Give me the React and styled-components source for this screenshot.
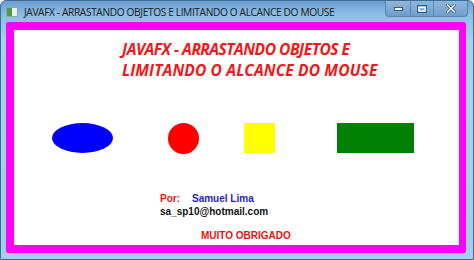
import React from 'react'
import styled, { createGlobalStyle } from 'styled-components'

const Global = createGlobalStyle`
  html, body { margin: 0; padding: 0; background: #ffffff; }
  body { width: 474px; height: 260px; overflow: hidden; }
`

const Window = styled.div`
  width: 474px;
  height: 260px;
  box-sizing: border-box;
  display: flex;
  flex-direction: column;
  background: linear-gradient(180deg, #6c9fd0 0px, #8dbde6 14px, #a6d3f1 40px, #9fd0ee 100%);
  border: 1px solid #3f6c94;
  border-radius: 6px 6px 0 0;
  overflow: hidden;
`

const TitleBar = styled.div`
  height: 21px;
  display: flex;
  align-items: flex-start;
  padding-left: 5px;
`

const AppIcon = styled.div`
  width: 12px;
  height: 10px;
  margin-top: 6px;
  background: linear-gradient(90deg, #4f9c3c 0 5px, #e8f0f4 5px);
  border: 1px solid #8ea4b4;
  box-sizing: border-box;
`

const Title = styled.div`
  margin-left: 6px;
  margin-top: 4px;
  font-family: "Open Sans", "DejaVu Sans", sans-serif;
  font-size: 10.2px;
  color: #1a1a1a;
  white-space: nowrap;
  flex: 1;
  letter-spacing: -0.38px;
`

const Buttons = styled.div`
  display: flex;
  height: 15px;
  margin-right: 5px;
  border: 1px solid #5b86b0;
  border-top: none;
  border-radius: 0 0 4px 4px;
  background: linear-gradient(180deg, #8fb7dd, #6e9ccb);
  overflow: hidden;
`

const Btn = styled.div`
  width: ${p => p.$w}px;
  display: flex;
  align-items: center;
  justify-content: center;
  border-left: ${p => (p.$first ? 'none' : '1px solid #5b86b0')};
`

const Client = styled.div`
  flex: 1;
  margin: 0 7px 6px 5px;
  background: #ff00ff;
  padding: 8px 7px 8px 8px;
  display: flex;
  border-radius: 2px;
`

const Stage = styled.div`
  flex: 1;
  background: #ffffff;
  display: flex;
  flex-direction: column;
`

const Heading = styled.h1`
  margin: 9px 0 0 106px;
  font-family: "Open Sans", "DejaVu Sans", sans-serif;
  font-style: italic;
  font-weight: 700;
  font-size: 15.6px;
  line-height: 21px;
  color: #f01818;
`

const HeadLine = styled.div`
  white-space: nowrap;
  letter-spacing: ${p => p.$ls}px;
  padding-left: ${p => p.$indent || 0}px;
`

const Shapes = styled.div`
  display: flex;
  align-items: center;
  margin: 42px 0 0 38px;
  height: 30px;
`

const Shape = styled.div`
  width: ${p => p.$w}px;
  height: ${p => p.$h}px;
  margin-left: ${p => p.$gap}px;
  background: ${p => p.$color};
  border-radius: ${p => (p.$round ? '50%' : '0')};
  flex-shrink: 0;
`

const Credits = styled.div`
  margin: 39px 0 0 146px;
  font-family: "Liberation Sans", Arial, sans-serif;
  font-weight: 700;
  font-size: 10px;
  line-height: 13px;
`

const Line = styled.div`
  display: flex;
  color: ${p => p.$color || '#111111'};
`

const Label = styled.span`
  color: #ee1111;
  width: 32px;
`

const Name = styled.span`
  color: #2424d0;
`

const Thanks = styled.div`
  margin: 12px 0 0 187px;
  font-family: "Liberation Sans", Arial, sans-serif;
  font-weight: 700;
  font-size: 10px;
  color: #ee1111;
`

export default function App() {
  return (
    <>
      <Global />
      <Window>
        <TitleBar>
          <AppIcon />
          <Title>JAVAFX - ARRASTANDO OBJETOS E LIMITANDO O ALCANCE DO MOUSE</Title>
          <Buttons>
            <Btn $w={24} $first>
              <svg width="9" height="4" viewBox="0 0 9 4">
                <rect x="0.5" y="0.5" width="8" height="3" fill="#fff" stroke="#3a5f86" strokeWidth="1" />
              </svg>
            </Btn>
            <Btn $w={22}>
              <svg width="10" height="8" viewBox="0 0 10 8">
                <rect x="0.5" y="0.5" width="9" height="7" fill="none" stroke="#3a5f86" strokeWidth="1" />
                <rect x="2" y="2.5" width="6" height="3.5" fill="none" stroke="#fff" strokeWidth="1.4" />
              </svg>
            </Btn>
            <Btn $w={33}>
              <svg width="10" height="9" viewBox="0 0 10 9">
                <path d="M1.5 1 L8.5 8 M8.5 1 L1.5 8" stroke="#3a5f86" strokeWidth="3" strokeLinecap="square" />
                <path d="M1.5 1 L8.5 8 M8.5 1 L1.5 8" stroke="#fff" strokeWidth="1.4" strokeLinecap="square" />
              </svg>
            </Btn>
          </Buttons>
        </TitleBar>
        <Client>
          <Stage>
            <Heading>
              <HeadLine $ls={-0.52} $indent={2}>JAVAFX - ARRASTANDO OBJETOS E</HeadLine>
              <HeadLine $ls={0.1} $indent={2}>LIMITANDO O ALCANCE DO MOUSE</HeadLine>
            </Heading>
            <Shapes>
              <Shape $w={61} $h={30} $gap={0} $color="#0000ff" $round />
              <Shape $w={31} $h={31} $gap={55} $color="#ff0000" $round />
              <Shape $w={31} $h={30} $gap={45} $color="#ffff00" />
              <Shape $w={77} $h={30} $gap={62} $color="#008000" />
            </Shapes>
            <Credits>
              <Line>
                <Label>Por:</Label>
                <Name>Samuel Lima</Name>
              </Line>
              <Line>sa_sp10@hotmail.com</Line>
            </Credits>
            <Thanks>MUITO OBRIGADO</Thanks>
          </Stage>
        </Client>
      </Window>
    </>
  )
}
